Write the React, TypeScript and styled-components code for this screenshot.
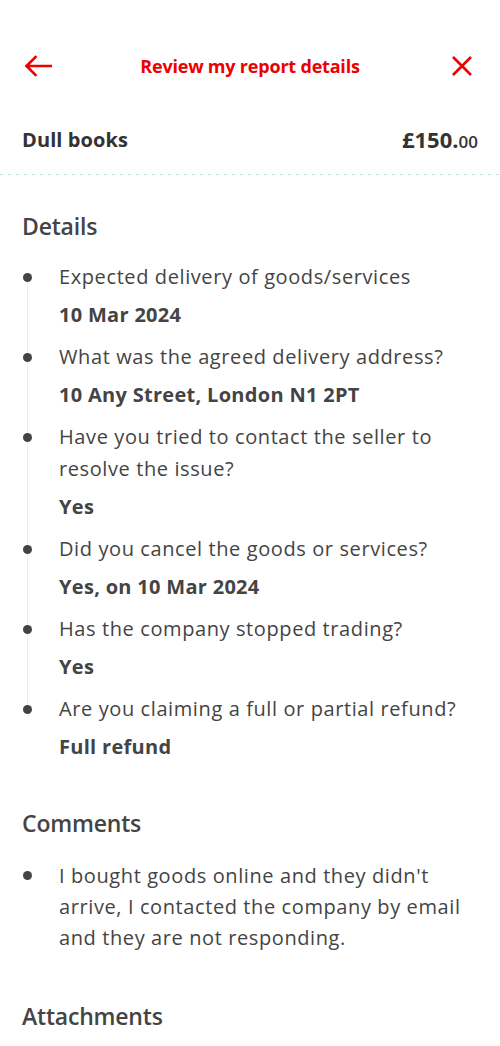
import React from "react";
import styled, { createGlobalStyle } from "styled-components";

const Global = createGlobalStyle`
  html, body { margin: 0; padding: 0; background: #ffffff; }
  body { font-family: "Open Sans", "Noto Sans", sans-serif; color: #444444; -webkit-font-smoothing: antialiased; }
  * { box-sizing: border-box; }
`;

const Page = styled.div`
  width: 500px;
  min-height: 1046px;
  background: #fff;
  display: flex;
  flex-direction: column;
`;

const Header = styled.header`
  display: flex;
  align-items: center;
  justify-content: space-between;
  height: 54px;
  margin-top: 39px;
  padding: 0 22px 0 22px;
`;

const IconButton = styled.button`
  width: 32px;
  height: 32px;
  border: 0;
  background: transparent;
  padding: 0;
  display: flex;
  align-items: center;
  justify-content: center;
  cursor: pointer;
`;

const Title = styled.h1`
  margin: 0;
  font-size: 18px;
  font-weight: 700;
  color: #ec0000;
  letter-spacing: -0.2px;
`;

const Summary = styled.div`
  display: flex;
  align-items: center;
  justify-content: space-between;
  padding: 0 22px;
  height: 60px;
  margin-top: 16px;
`;

const Merchant = styled.span`
  font-size: 20px;
  font-weight: 700;
  color: #333;
  letter-spacing: 0.1px;
`;

const Amount = styled.span`
  font-size: 22px;
  font-weight: 700;
  color: #333;
`;

const Pence = styled.span`
  font-size: 17px;
  font-weight: 600;
`;

const Divider = styled.div`
  height: 1px;
  margin: 5px 0 0 0;
  background-image: repeating-linear-gradient(
    to right,
    #c3e3e3 0,
    #c3e3e3 3px,
    transparent 3px,
    transparent 8px
  );
`;

const Section = styled.section<{ $top: number }>`
  padding: 0 22px;
  margin-top: ${(p) => p.$top}px;
`;

const SectionTitle = styled.h2`
  margin: 0;
  font-size: 23px;
  line-height: 30px;
  font-weight: 600;
  color: #444;
  letter-spacing: -0.2px;
`;

const List = styled.ul<{ $top: number }>`
  list-style: none;
  margin: ${(p) => p.$top}px 0 0 0;
  padding: 0;
`;

const Item = styled.li`
  display: grid;
  grid-template-columns: 37px 1fr;
`;

const Rail = styled.div`
  display: flex;
  flex-direction: column;
  align-items: flex-start;
`;

const RailSegment = styled.span<{ $show: boolean; $h?: number }>`
  width: 1px;
  margin-left: 4.5px;
  background: ${(p) => (p.$show ? "#ebebeb" : "transparent")};
  ${(p) => (p.$h !== undefined ? `height: ${p.$h}px; flex: none;` : "flex: 1;")}
`;

const Dot = styled.span`
  width: 9px;
  height: 9px;
  border-radius: 50%;
  background: #444;
  margin-left: 0.5px;
  flex: none;
`;

const Body = styled.div<{ $pad: number }>`
  display: flex;
  flex-direction: column;
  padding-bottom: ${(p) => p.$pad}px;
`;

const Question = styled.p<{ $lh: number }>`
  margin: 0;
  font-size: 20px;
  line-height: ${(p) => p.$lh}px;
  font-weight: 400;
  letter-spacing: 0.6px;
  color: #444;
`;

const Answer = styled.p`
  margin: 6px 0 0 0;
  font-size: 20px;
  line-height: 32px;
  font-weight: 700;
  letter-spacing: 0.3px;
  color: #444;
`;

const BackArrow = () => (
  <svg width="28" height="22" viewBox="0 0 28 22" fill="none">
    <path d="M27 11H2.5M11.5 2L2.5 11l9 9" stroke="#ec0000" strokeWidth="2.6" strokeLinecap="square" />
  </svg>
);

const CloseIcon = () => (
  <svg width="22" height="22" viewBox="0 0 22 22" fill="none">
    <path d="M2 2l18 18M20 2L2 20" stroke="#ec0000" strokeWidth="2.6" />
  </svg>
);

const details = [
  { q: "Expected delivery of goods/services", a: "10 Mar 2024" },
  { q: "What was the agreed delivery address?", a: "10 Any Street, London N1 2PT" },
  { q: "Have you tried to contact the seller to resolve the issue?", a: "Yes" },
  { q: "Did you cancel the goods or services?", a: "Yes, on 10 Mar 2024" },
  { q: "Has the company stopped trading?", a: "Yes" },
  { q: "Are you claiming a full or partial refund?", a: "Full refund" },
];

export default function App() {
  const last = details.length - 1;
  return (
    <Page>
      <Global />
      <Header>
        <IconButton aria-label="Back">
          <BackArrow />
        </IconButton>
        <Title>Review my report details</Title>
        <IconButton aria-label="Close">
          <CloseIcon />
        </IconButton>
      </Header>
      <Summary>
        <Merchant>Dull books</Merchant>
        <Amount>
          £150.<Pence>00</Pence>
        </Amount>
      </Summary>
      <Divider />
      <Section $top={36}>
        <SectionTitle>Details</SectionTitle>
        <List $top={20}>
          {details.map((d, i) => (
            <Item key={i}>
              <Rail>
                <RailSegment $show={i > 0} $h={11.5} />
                <Dot />
                <RailSegment $show={i < last} />
              </Rail>
              <Body $pad={i < last ? 10 : 0}>
                <Question $lh={32}>{d.q}</Question>
                <Answer>{d.a}</Answer>
              </Body>
            </Item>
          ))}
        </List>
      </Section>
      <Section $top={45}>
        <SectionTitle>Comments</SectionTitle>
        <List $top={22}>
          <Item>
            <Rail>
              <RailSegment $show={false} $h={11} />
              <Dot />
            </Rail>
            <Body $pad={0}>
              <Question $lh={31}>
                I bought goods online and they didn't arrive, I contacted the company by email and they are not responding.
              </Question>
            </Body>
          </Item>
        </List>
      </Section>
      <Section $top={48}>
        <SectionTitle>Attachments</SectionTitle>
      </Section>
    </Page>
  );
}
